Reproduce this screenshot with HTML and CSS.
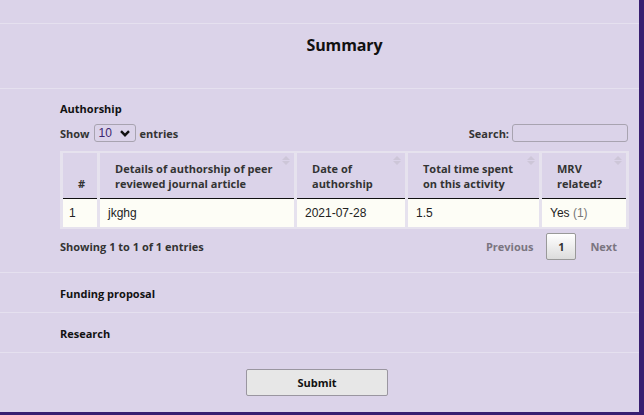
FILE: index.html
```html
<!DOCTYPE html>
<html>
<head>
<meta charset="utf-8">
<link rel="stylesheet" href="styles.css">
</head>
<body>
<div class="page">
  <div class="topband"></div>
  <div class="title-row"><h1 class="title">Summary</h1></div>

  <section class="section section-auth">
    <h2 class="sec-title">Authorship</h2>
    <div class="dt-top">
      <label class="dt-length">Show
        <span class="select"><span class="select-val">10</span>
          <svg class="chev" viewBox="0 0 10 7" width="10" height="7"><path d="M1 1.2 L5 5.2 L9 1.2" fill="none" stroke="#111" stroke-width="2.4"/></svg>
        </span> entries</label>
      <label class="dt-search">Search: <span class="search-input"></span></label>
    </div>
    <table class="dt">
      <colgroup>
        <col class="c1"><col class="c2"><col class="c3"><col class="c4"><col class="c5">
      </colgroup>
      <thead>
        <tr>
          <th class="th-num">#</th>
          <th class="sortable">Details of authorship of peer reviewed journal article<span class="sort"></span></th>
          <th class="sortable">Date of authorship<span class="sort"></span></th>
          <th class="sortable">Total time spent on this activity<span class="sort"></span></th>
          <th class="sortable">MRV related?<span class="sort"></span></th>
        </tr>
      </thead>
      <tbody>
        <tr>
          <td>1</td>
          <td>jkghg</td>
          <td>2021-07-28</td>
          <td>1.5</td>
          <td>Yes <span class="muted">(1)</span></td>
        </tr>
      </tbody>
    </table>
    <div class="dt-bottom">
      <div class="dt-info">Showing 1 to 1 of 1 entries</div>
      <div class="dt-paging">
        <span class="pg-link">Previous</span>
        <span class="pg-btn">1</span>
        <span class="pg-link">Next</span>
      </div>
    </div>
  </section>

  <section class="section section-row"><h2 class="sec-title">Funding proposal</h2></section>
  <section class="section section-row"><h2 class="sec-title">Research</h2></section>

  <div class="submit-row"><button class="submit">Submit</button></div>
</div>
</body>
</html>
```

FILE: styles.css
```css
html, body {
  margin: 0;
  padding: 0;
  background: #371e70;
  width: 644px;
  height: 415px;
  overflow: hidden;
}
.page {
  width: 639px;
  height: 412px;
  background: #dbd3e9;
  font-family: "Open Sans", "DejaVu Sans", sans-serif;
  color: #111;
}
.topband {
  height: 23px;
  border-bottom: 1px solid #e5e0ef;
}
.title-row {
  height: 65px;
  border-bottom: 1px solid #e5e0ef;
  display: flex;
  align-items: flex-start;
  justify-content: center;
  padding: 10px 0 0 50px;
  box-sizing: border-box;
}
.title {
  margin: 0;
  font-size: 16px;
  line-height: 22px;
  font-weight: 700;
  letter-spacing: -0.1px;
}
.section {
  border-bottom: 1px solid #e5e0ef;
  padding: 0 11px 0 60px;
}
.sec-title {
  margin: 0;
  font-size: 11px;
  font-weight: 700;
  line-height: 15px;
}
.section-auth {
  padding-top: 12px;
  height: 184px;
  box-sizing: border-box;
}
.section-row {
  height: 40px;
  box-sizing: border-box;
  display: flex;
  align-items: center;
  padding-top: 1px;
}
.dt-top {
  display: flex;
  justify-content: space-between;
  align-items: center;
  margin-top: 8px;
  font-size: 11px;
  font-weight: 700;
  color: #333;
}
.dt-length, .dt-search {
  display: flex;
  align-items: center;
  gap: 3px;
}
.select {
  display: inline-flex;
  align-items: center;
  justify-content: space-between;
  width: 42px;
  height: 18px;
  box-sizing: border-box;
  border: 1px solid #a8a3b0;
  border-radius: 3px;
  padding: 0 5px 0 4px;
  background: #dbd3e9;
  margin: 0 1px;
}
.select-val {
  font-weight: 400;
  font-size: 12px;
  color: #3b2770;
  font-family: "Liberation Sans", Arial, sans-serif;
}
.search-input {
  display: inline-block;
  width: 116px;
  height: 18px;
  box-sizing: border-box;
  border: 1px solid #a8a3b0;
  border-radius: 3px;
  background: #dbd3e9;
}
.dt {
  margin-top: 9px;
  width: 568px;
  border-collapse: collapse;
  border: 2px solid #e6e2ee;
  table-layout: fixed;
}
.c1 { width: 37px; }
.c2 { width: 197px; }
.c3 { width: 111px; }
.c4 { width: 134px; }
.c5 { width: 87px; }
.dt th {
  position: relative;
  text-align: left;
  vertical-align: bottom;
  font-size: 11px;
  font-weight: 700;
  line-height: 15px;
  color: #333;
  padding: 7px 18px 7px 15px;
  border: 3px solid #e6e2ee;
  border-top: 0;
  border-bottom: 1px solid #111;
  height: 31px;
}
.sort {
  position: absolute;
  top: 2px;
  right: 4px;
  width: 8px;
  height: 12px;
}
.sort::before, .sort::after {
  content: "";
  position: absolute;
  left: 0;
  border-left: 4px solid transparent;
  border-right: 4px solid transparent;
}
.sort::before {
  top: 1px;
  border-bottom: 4px solid #cdc6d8;
}
.sort::after {
  top: 6px;
  border-top: 4px solid #cdc6d8;
}
.dt td {
  background: #fdfdf6;
  font-family: "Liberation Sans", Arial, sans-serif;
  font-size: 12px;
  color: #222;
  padding: 0 8px 0 8px;
  height: 28px;
  border: 3px solid #e6e2ee;
  border-top: 0;
  border-bottom: 2px solid #e6e2ee;
}
.dt td:first-child {
  padding-left: 6px;
}
.muted { color: #777; }
.dt-bottom {
  display: flex;
  justify-content: space-between;
  align-items: center;
  margin-top: 4px;
  font-size: 11px;
  font-weight: 700;
  color: #333;
}
.dt-paging {
  display: flex;
  align-items: center;
  margin-right: 11px;
}
.pg-link {
  color: #7a7580;
}
.pg-btn {
  display: inline-flex;
  align-items: center;
  justify-content: center;
  width: 30px;
  height: 27px;
  box-sizing: border-box;
  margin: 0 14px 0 13px;
  border: 1px solid #999;
  border-radius: 2px;
  background: linear-gradient(#ffffff, #dcdcdc);
  color: #333;
}
.submit-row {
  display: flex;
  justify-content: center;
  padding: 16px 5px 0 0;
}
.submit {
  width: 142px;
  height: 27px;
  border: 1px solid #9a96a0;
  border-radius: 2px;
  background: #e7e7e7;
  font-family: "Open Sans", sans-serif;
  font-size: 11px;
  font-weight: 700;
  color: #111;
}
```
